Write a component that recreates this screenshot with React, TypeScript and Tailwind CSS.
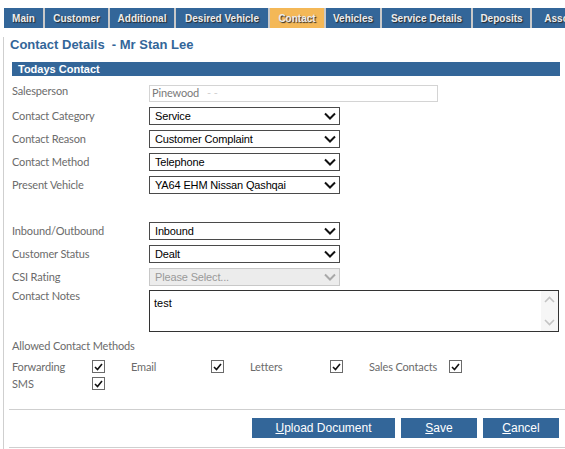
import type { ReactNode } from 'react';

const tabs = [
  { label: 'Main', w: 'w-[41px]' },
  { label: 'Customer', w: 'w-[65px]' },
  { label: 'Additional', w: 'w-[66px]' },
  { label: 'Desired Vehicle', w: 'w-[94px]' },
  { label: 'Contact', w: 'w-[56px]', active: true },
  { label: 'Vehicles', w: 'w-[56px]' },
  { label: 'Service Details', w: 'w-[91px]' },
  { label: 'Deposits', w: 'w-[59px]' },
  { label: 'Associated', w: 'w-[80px]' },
];

const Chevron = ({ disabled }: { disabled?: boolean }) => (
  <svg width="12" height="8" viewBox="0 0 12 8" className="absolute right-[3px] top-1/2 -translate-y-1/2">
    <polyline
      points="1,1.5 6,6.5 11,1.5"
      fill="none"
      stroke={disabled ? '#a8a8a8' : '#111'}
      strokeWidth="2"
    />
  </svg>
);

const Select = ({ value, disabled }: { value: string; disabled?: boolean }) => (
  <div
    className={`relative w-[191px] h-[18px] border flex items-center pl-[5px] text-[11px] font-['Liberation_Sans',Arial,sans-serif] ${
      disabled ? 'bg-[#ececec] border-[#c8c8c8] text-[#9a9a9a]' : 'bg-white border-[#4a4a4a] text-black'
    }`}
  >
    {value}
    <Chevron disabled={disabled} />
  </div>
);

const Row = ({ label, children, className = '' }: { label: string; children: ReactNode; className?: string }) => (
  <div className={`flex items-center ${className}`}>
    <div className="w-[137px] text-[#6b6b6b]">{label}</div>
    {children}
  </div>
);

const Check = () => (
  <div className="w-[13px] h-[13px] border border-[#6a6a6a] bg-white flex items-center justify-center">
    <svg width="9" height="8" viewBox="0 0 9 8">
      <polyline points="1,4 3.5,6.5 8,1" fill="none" stroke="#111" strokeWidth="1.6" />
    </svg>
  </div>
);

const CheckItem = ({ label }: { label: string }) => (
  <div className="flex items-center w-[119px] h-[13px] leading-[13px]">
    <div className="w-[80px] text-[#6b6b6b]">{label}</div>
    <Check />
  </div>
);

const Button = ({ first, rest, w }: { first: string; rest: string; w: string }) => (
  <button
    type="button"
    className={`${w} h-[20px] bg-[#336699] text-white text-[12px] font-['Liberation_Sans',Arial,sans-serif] flex items-center justify-center`}
  >
    <span className="underline">{first}</span>
    {rest}
  </button>
);

const App = () => {
  return (
    <div className="w-[565px] h-[449px] overflow-hidden bg-white font-['Lato',sans-serif] text-[11px] tracking-[-0.15px]">
      {/* Tabs */}
      <div className="pt-[8px] pl-[4px] flex whitespace-nowrap overflow-hidden tracking-normal">
        {tabs.map((t) => (
          <div
            key={t.label}
            className={`${t.w} shrink-0 h-[20px] border-r-2 border-[#c9c9c9] flex items-center justify-center text-[10px] font-bold font-['Liberation_Sans',Arial,sans-serif] text-[#ececec] [text-shadow:1px_1px_1px_#2a2a2a] ${
              t.active ? 'bg-[#f4b857]' : 'bg-[#336699]'
            }`}
          >
            {t.label}
          </div>
        ))}
      </div>

      {/* Content */}
      <div className="ml-[3px] w-[562px] h-[421px] border-l border-[#cfcfcf] pl-[6px]">
        <h1 className="mt-[9px] h-[16px] leading-[16px] text-[13px] font-bold tracking-normal text-[#336699] font-['Liberation_Sans',Arial,sans-serif] whitespace-pre">
          Contact Details  - Mr Stan Lee
        </h1>

        <div className="mt-[9px] ml-[2px] w-[548px] h-[14px] bg-[#336699] pl-[6px] text-white text-[11px] leading-[14px] font-bold tracking-normal font-['Liberation_Sans',Arial,sans-serif]">
          Todays Contact
        </div>

        <div className="pl-[2px]">
          <div className="flex items-start mt-[9px]">
            <div className="w-[137px] text-[#6b6b6b] leading-[11px]">Salesperson</div>
            <div className="w-[289px] h-[17px] border border-[#d4d4d4] flex items-center pl-[2px] text-[#7a7a7a]">
              Pinewood<span className="ml-[8px] text-[#d0d0d0]">- -</span>
            </div>
          </div>
          <Row label="Contact Category" className="mt-[5px]">
            <Select value="Service" />
          </Row>
          <Row label="Contact Reason" className="mt-[5px]">
            <Select value="Customer Complaint" />
          </Row>
          <Row label="Contact Method" className="mt-[5px]">
            <Select value="Telephone" />
          </Row>
          <Row label="Present Vehicle" className="mt-[5px]">
            <Select value="YA64 EHM Nissan Qashqai" />
          </Row>

          <Row label="Inbound/Outbound" className="mt-[28px]">
            <Select value="Inbound" />
          </Row>
          <Row label="Customer Status" className="mt-[5px]">
            <Select value="Dealt" />
          </Row>
          <Row label="CSI Rating" className="mt-[5px]">
            <Select value="Please Select..." disabled />
          </Row>

          <div className="flex items-start mt-[4px]">
            <div className="w-[137px] text-[#6b6b6b] leading-[12px]">Contact Notes</div>
            <div className="w-[410px] h-[42px] border border-[#333] flex">
              <div className="flex-1 pl-[4px] pt-[4px] text-[11px] tracking-normal text-black font-['Liberation_Sans',Arial,sans-serif]">
                test
              </div>
              <div className="w-[17px] bg-[#f6f6f6] flex flex-col items-center justify-between py-[5px]">
                <svg width="11" height="7" viewBox="0 0 11 7">
                  <polyline points="1,6 5.5,1.5 10,6" fill="none" stroke="#c4c4c4" strokeWidth="1.6" />
                </svg>
                <svg width="11" height="7" viewBox="0 0 11 7">
                  <polyline points="1,1 5.5,5.5 10,1" fill="none" stroke="#c4c4c4" strokeWidth="1.6" />
                </svg>
              </div>
            </div>
          </div>

          <div className="mt-[7px] h-[14px] leading-[14px] text-[#6b6b6b]">Allowed Contact Methods</div>

          <div className="mt-[7px] flex">
            <CheckItem label="Forwarding" />
            <CheckItem label="Email" />
            <CheckItem label="Letters" />
            <CheckItem label="Sales Contacts" />
          </div>
          <div className="mt-[4px] flex">
            <CheckItem label="SMS" />
          </div>
        </div>

        <div className="mt-[19px] -ml-px h-px bg-[#cfcfcf]" />

        <div className="mt-[8px] mr-[6px] flex justify-end gap-[6px] tracking-normal">
          <Button first="U" rest="pload Document" w="w-[143px]" />
          <Button first="S" rest="ave" w="w-[76px]" />
          <Button first="C" rest="ancel" w="w-[76px]" />
        </div>

        <div className="mt-[9px] -ml-px h-px bg-[#cfcfcf]" />
      </div>
    </div>
  );
};

export default App;
